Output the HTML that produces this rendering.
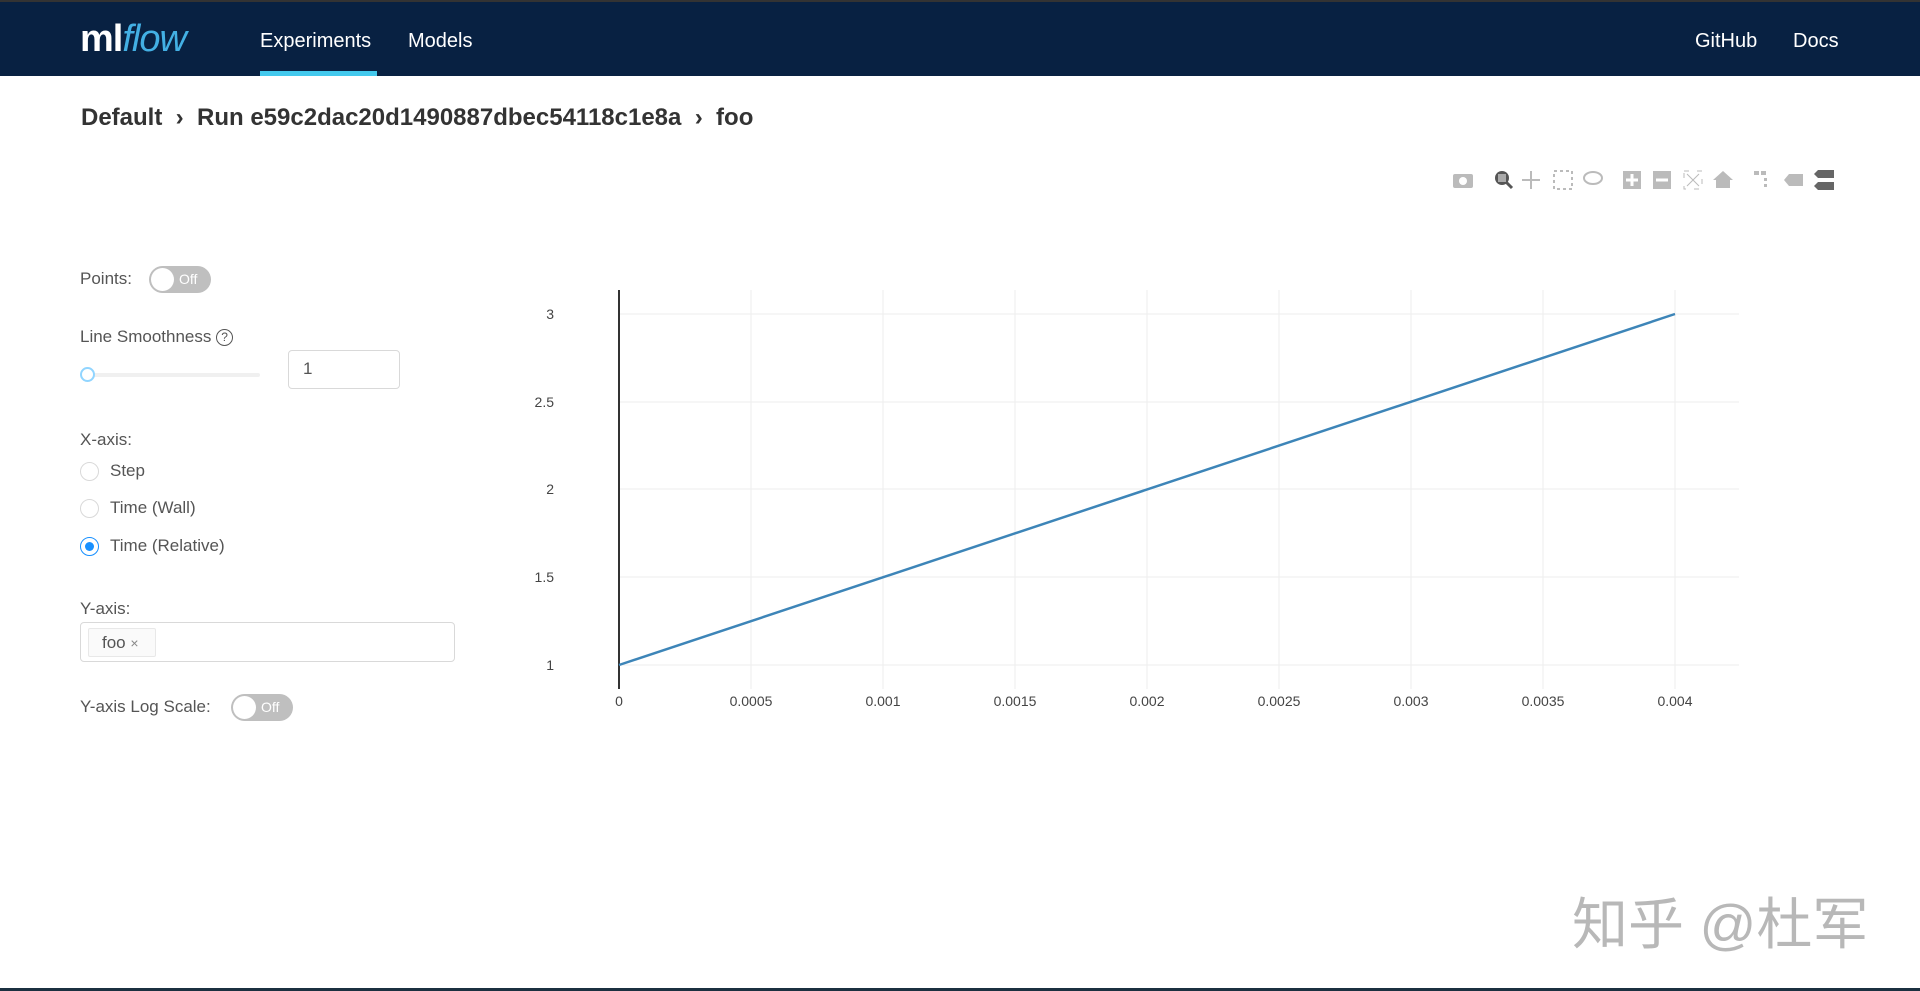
<!DOCTYPE html>
<html><head><meta charset="utf-8"><style>
*{box-sizing:border-box;margin:0;padding:0}
body{width:1920px;height:991px;background:#fff;font-family:"Liberation Sans",sans-serif;position:relative;overflow:hidden;color:#333}
.nav{position:absolute;left:0;top:0;width:1920px;height:76px;background:#082142;border-top:2px solid #333}
.nav a{position:absolute;color:#fff;font-size:20px;top:28px}
.abs{position:absolute}
.lbl{position:absolute;font-size:17px;color:#555;left:80px}
.tog{position:absolute;width:62px;height:27px;border-radius:14px;background:#bfbfbf}
.tog i{position:absolute;left:2px;top:2px;width:23px;height:23px;border-radius:50%;background:#fff}
.tog span{position:absolute;left:30px;top:5px;color:#fff;font-size:14px}
.radio{position:absolute;left:80px;width:19px;height:19px;border:1px solid #d9d9d9;border-radius:50%}
</style></head><body>
<div class="nav">
 <div class="abs" style="left:80px;top:16px;font-size:38px;color:#fff;font-weight:bold;letter-spacing:-1px">ml<span style="color:#43b0e4;font-style:italic;font-weight:normal">flow</span></div>
 <a style="left:260px">Experiments</a>
 <div class="abs" style="left:260px;top:69px;width:117px;height:5px;background:#43c9ed"></div>
 <a style="left:408px">Models</a>
 <a style="left:1695px">GitHub</a>
 <a style="left:1793px">Docs</a>
</div>
<div class="abs" style="left:81px;top:104px;font-size:24px;font-weight:bold;color:#333">Default &nbsp;›&nbsp; Run e59c2dac20d1490887dbec54118c1e8a &nbsp;›&nbsp; foo</div>
<svg class="abs" style="left:1450px;top:168px" width="390" height="24" fill="#bbb">
<rect x="3" y="6" width="20" height="14" rx="2"/><circle cx="13" cy="13" r="4" fill="#fff"/>
<circle cx="52" cy="10" r="7" fill="#555"/><rect x="48" y="6" width="8" height="8" fill="#aaa"/><path d="M56 14l6 6" stroke="#555" stroke-width="3"/>
<path d="M81 3v18M72 12h18" stroke="#bbb" stroke-width="2"/>
<rect x="104" y="3" width="18" height="18" fill="none" stroke="#bbb" stroke-width="2" stroke-dasharray="3 3"/>
<ellipse cx="143" cy="10" rx="9" ry="6" fill="none" stroke="#bbb" stroke-width="2"/>
<rect x="173" y="3" width="18" height="18"/><path d="M182 6v12M176 12h12" stroke="#fff" stroke-width="3"/>
<rect x="203" y="3" width="18" height="18"/><path d="M206 12h12" stroke="#fff" stroke-width="3"/>
<rect x="234" y="3" width="18" height="18" fill="none" stroke="#bbb" stroke-dasharray="5 8"/><path d="M237 6l12 12M249 6l-12 12" stroke="#bbb"/>
<path d="M263 12l10-9 10 9h-3v8h-14v-8z"/>
<rect x="304" y="3" width="5" height="4"/><rect x="311" y="3" width="5" height="4"/><rect x="314" y="10" width="3" height="3"/><rect x="314" y="16" width="3" height="3"/>
<path d="M334 12l5-6h14v12h-14z"/>
<path d="M364 6l4-4h16v8h-16zM364 18l4-4h16v8h-16z" fill="#666"/>
</svg>
<div class="lbl" style="top:269px">Points:</div>
<div class="tog" style="left:149px;top:266px"><i></i><span>Off</span></div>
<div class="lbl" style="top:327px">Line Smoothness <span style="display:inline-block;width:17px;height:17px;border:1.5px solid #555;border-radius:50%;font-size:12px;text-align:center;line-height:14px;vertical-align:1px">?</span></div>
<div class="abs" style="left:85px;top:373px;width:175px;height:4px;background:#f0f0f0;border-radius:2px"></div>
<div class="abs" style="left:80px;top:367px;width:15px;height:15px;border:2px solid #91d5ff;border-radius:50%;background:#fff"></div>
<div class="abs" style="left:288px;top:350px;width:112px;height:39px;border:1px solid #d9d9d9;border-radius:4px;font-size:17px;padding:8px 14px;color:#555">1</div>
<div class="lbl" style="top:430px">X-axis:</div>
<div class="radio" style="top:462px"></div><div class="lbl" style="left:110px;top:461px">Step</div>
<div class="radio" style="top:499px"></div><div class="lbl" style="left:110px;top:498px">Time (Wall)</div>
<div class="radio" style="top:537px;border-color:#1890ff"><div style="margin:4px;width:9px;height:9px;border-radius:50%;background:#1890ff"></div></div><div class="lbl" style="left:110px;top:536px">Time (Relative)</div>
<div class="lbl" style="top:599px">Y-axis:</div>
<div class="abs" style="left:80px;top:622px;width:375px;height:40px;border:1px solid #d9d9d9;border-radius:4px"></div>
<div class="abs" style="left:88px;top:628px;width:68px;height:29px;background:#fafafa;border:1px solid #e8e8e8;border-radius:2px;font-size:17px;color:#555;padding:4px 13px">foo <span style="font-size:14px;color:#888">×</span></div>
<div class="lbl" style="top:697px">Y-axis Log Scale:</div>
<div class="tog" style="left:231px;top:694px"><i></i><span>Off</span></div>
<svg class="abs" style="left:0;top:0" width="1920" height="991">
<g stroke="#eee" stroke-width="1">
<line x1="619" y1="314" x2="1739" y2="314"/><line x1="619" y1="402" x2="1739" y2="402"/><line x1="619" y1="489" x2="1739" y2="489"/><line x1="619" y1="577" x2="1739" y2="577"/><line x1="619" y1="665" x2="1739" y2="665"/>
<line x1="751" y1="290" x2="751" y2="689"/><line x1="883" y1="290" x2="883" y2="689"/><line x1="1015" y1="290" x2="1015" y2="689"/><line x1="1147" y1="290" x2="1147" y2="689"/><line x1="1279" y1="290" x2="1279" y2="689"/><line x1="1411" y1="290" x2="1411" y2="689"/><line x1="1543" y1="290" x2="1543" y2="689"/><line x1="1675" y1="290" x2="1675" y2="689"/>
</g>
<line x1="619" y1="290" x2="619" y2="689" stroke="#333" stroke-width="2"/>
<line x1="619" y1="665" x2="1675" y2="314" stroke="#3d85b8" stroke-width="2.5"/>
<g font-family="Liberation Sans" font-size="14" fill="#444" text-anchor="end">
<text x="554" y="319">3</text><text x="554" y="407">2.5</text><text x="554" y="494">2</text><text x="554" y="582">1.5</text><text x="554" y="670">1</text></g>
<g font-family="Liberation Sans" font-size="14" fill="#444" text-anchor="middle">
<text x="619" y="706">0</text><text x="751" y="706">0.0005</text><text x="883" y="706">0.001</text><text x="1015" y="706">0.0015</text><text x="1147" y="706">0.002</text><text x="1279" y="706">0.0025</text><text x="1411" y="706">0.003</text><text x="1543" y="706">0.0035</text><text x="1675" y="706">0.004</text></g>
</svg>
<div class="abs" style="left:1572px;top:880px;font-size:56px;color:#b8b8b8;font-family:'Liberation Sans','Noto Sans CJK SC',sans-serif;white-space:nowrap">知乎 @杜军</div>
<div class="abs" style="left:0;top:988px;width:1920px;height:3px;background:#1b3040"></div>
</body></html>
